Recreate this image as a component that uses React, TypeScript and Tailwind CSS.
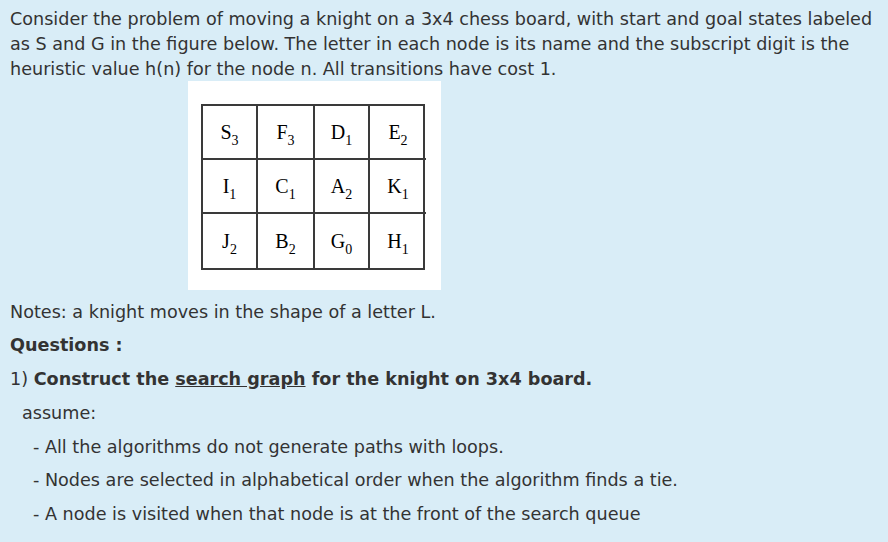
import React from "react";

const rows = [
  [["S", "3"], ["F", "3"], ["D", "1"], ["E", "2"]],
  [["I", "1"], ["C", "1"], ["A", "2"], ["K", "1"]],
  [["J", "2"], ["B", "2"], ["G", "0"], ["H", "1"]],
];

export default function App() {
  return (
    <div
      className="w-[888px] h-[542px] bg-[#d9edf7] text-[#333333] px-[10px] pt-[7px] text-[17.6px] leading-[25px] overflow-hidden"
      style={{ fontFamily: '"DejaVu Sans", Verdana, sans-serif' }}
    >
      <p>
        Consider the problem of moving a knight on a 3x4 chess board, with start and goal states labeled as S
        and G in the figure below. The letter in each node is its name and the subscript digit is the heuristic
        value h(n) for the node n. All transitions have cost 1.
      </p>
      <div className="ml-[178px] -mt-[1px] w-[253px] h-[209px] bg-white pl-[13px] pt-[23px]">
        <div
          className="grid grid-cols-[55px_57px_55px_56px] w-[224px] border-2 border-[#3a3a3a] text-[20px] text-black leading-none"
          style={{ fontFamily: '"Liberation Serif", "Times New Roman", serif' }}
        >
          {rows.flatMap((row, r) =>
            row.map(([l, s], c) => (
              <div
                key={`${r}-${c}`}
                className={`h-[54px] flex items-center justify-center ${c < 3 ? "border-r-2 border-[#3a3a3a]" : ""} ${r < 2 ? "border-b-2 border-[#3a3a3a]" : ""}`}
              >
                <span className="inline-flex items-end">
                  <span>{l}</span>
                  <span className="text-[14px] relative top-[6px]">{s}</span>
                </span>
              </div>
            ))
          )}
        </div>
      </div>
      <p className="mt-[10px]">Notes: a knight moves in the shape of a letter L.</p>
      <p className="mt-[8px] font-bold">Questions :</p>
      <p className="mt-[9px]">
        1) <b>Construct the <span className="underline">search graph</span> for the knight on 3x4 board.</b>
      </p>
      <p className="mt-[9px] pl-[12px]">assume:</p>
      <p className="mt-[9px] pl-[23px]">- All the algorithms do not generate paths with loops.</p>
      <p className="mt-[8px] pl-[23px]">- Nodes are selected in alphabetical order when the algorithm finds a tie.</p>
      <p className="mt-[9px] pl-[23px]">- A node is visited when that node is at the front of the search queue</p>
    </div>
  );
}
